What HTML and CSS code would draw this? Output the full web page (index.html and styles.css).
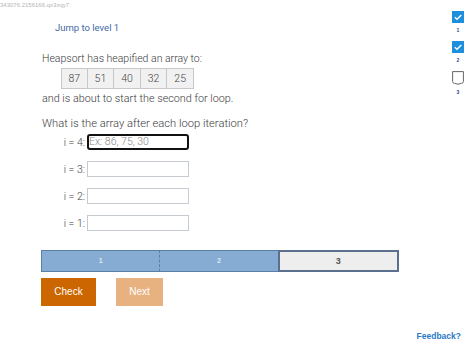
FILE: index.html
```html
<!DOCTYPE html>
<html>
<head>
<meta charset="utf-8">
<link rel="stylesheet" href="styles.css">
</head>
<body>
<div class="page">
  <div class="top">
    <div class="main">
      <div class="uid">343076.2156166.qx3zqy7</div>
      <div class="jump">Jump to level 1</div>
      <p class="line first">Heapsort has heapified an array to:</p>
      <div class="array">
        <span class="cell">87</span><span class="cell">51</span><span class="cell">40</span><span class="cell">32</span><span class="cell">25</span>
      </div>
      <p class="line second-line">and is about to start the second for loop.</p>
      <p class="line q">What is the array after each loop iteration?</p>
      <div class="rows">
        <div class="row"><span class="lbl">i = 4:</span><span class="input focus"><span class="ph">Ex: 86, 75, 30</span></span></div>
        <div class="row"><span class="lbl">i = 3:</span><span class="input"></span></div>
        <div class="row"><span class="lbl">i = 2:</span><span class="input"></span></div>
        <div class="row"><span class="lbl">i = 1:</span><span class="input"></span></div>
      </div>
      <div class="progress">
        <div class="seg done">1</div>
        <div class="seg done second">2</div>
        <div class="seg current">3</div>
      </div>
      <div class="buttons">
        <span class="btn check">Check</span>
        <span class="btn next">Next</span>
      </div>
    </div>
    <div class="side">
      <div class="lvl">
        <svg class="box" width="12" height="12" viewBox="0 0 12 12"><rect width="12" height="12" fill="#1e8fdc"/><path d="M2.8 6.2 L5 8.2 L9.3 3.9" stroke="#fff" stroke-width="1.4" fill="none"/></svg>
        <span class="num">1</span>
      </div>
      <div class="lvl">
        <svg class="box" width="12" height="12" viewBox="0 0 12 12"><rect width="12" height="12" fill="#1e8fdc"/><path d="M2.8 6.2 L5 8.2 L9.3 3.9" stroke="#fff" stroke-width="1.4" fill="none"/></svg>
        <span class="num">2</span>
      </div>
      <div class="lvl">
        <svg class="box" width="12" height="14" viewBox="0 0 12 14"><path d="M0.6 0.6 H11.4 V10.6 Q11.4 12 9.5 12.4 L6 13.2 L2.5 12.4 Q0.6 12 0.6 10.6 Z" fill="#fff" stroke="#666" stroke-width="1"/></svg>
        <span class="num">3</span>
      </div>
    </div>
  </div>
  <div class="foot"><span class="feedback">Feedback?</span></div>
</div>
</body>
</html>
```

FILE: styles.css
```css
* { box-sizing: border-box; }
html, body { margin: 0; padding: 0; background: #fff; }
body { font-family: Roboto, "Noto Sans", sans-serif; color: #3a3a3a; font-weight: 300; }
.page { width: 472px; height: 343px; display: flex; flex-direction: column; }
.top { display: flex; flex: 1; }
.main { flex: 1; }
.uid { font-family: "Liberation Sans", sans-serif; font-size: 6px; color: #b5b5b5; padding-top: 2px; height: 9px; line-height: 7px; }
.jump { font-size: 9.5px; color: #3f6aa3; margin: 13px 0 0 55px; line-height: 11px; font-weight: 400; }
.line { margin: 0 0 0 42px; font-size: 10.5px; line-height: 12px; }
.line.first { margin-top: 20px; }
.line.second-line { font-size: 10.8px; }
.array { display: flex; margin: 3px 0 4px 61px; }
.cell { width: 26.6px; height: 21px; border: 1px solid #c8c8c8; border-left: none; background: #f1f1f1; font-size: 10.5px; line-height: 19px; text-align: center; color: #444; }
.cell:first-child { border-left: 1px solid #c8c8c8; }
.line.q { margin-top: 13px; font-size: 11.2px; }
.rows { display: flex; flex-direction: column; gap: 11px; margin-top: 4px; }
.row { display: flex; align-items: center; }
.lbl { width: 87px; text-align: right; font-size: 10.5px; padding-right: 2px; color: #444; }
.input { width: 102px; height: 16px; border: 1px solid #c5cbd0; background: #fff; display: block; }
.input.focus { border: 2px solid #111; border-radius: 3px; width: 102px; }
.ph { font-size: 10.5px; color: #888; line-height: 12px; padding-left: 0px; display: block; }
.progress { display: flex; margin: 19px 0 0 41px; width: 358px; height: 22px; }
.seg { flex: 1; font-family: "Liberation Sans", sans-serif; font-size: 7px; text-align: center; line-height: 20px; }
.seg.done { background: #87acd3; color: #dce8f4; border: 1px solid #5b7ea6; font-weight: bold; }
.seg.done:first-child { border-right: none; }
.seg.second { border-left: 1px dashed #5b7ea6; border-right: none; }
.seg.current { background: #eeeeee; border: 2px solid #5b6f8e; color: #555; font-size: 9px; font-weight: bold; line-height: 18px; }
.buttons { display: flex; gap: 20px; margin: 6px 0 0 41px; }
.btn { display: block; height: 28px; line-height: 28px; font-family: "Liberation Sans", sans-serif; font-size: 10px; color: #fff; text-align: center; font-weight: 400; }
.check { width: 55px; background: #cc6600; }
.next { width: 47px; background: #e8b280; }
.side { width: 28px; display: flex; flex-direction: column; align-items: center; padding-top: 11px; padding-right: 0; }
.lvl { display: flex; flex-direction: column; align-items: center; height: 30px; }
.box { display: block; }
.num { font-family: "Liberation Sans", sans-serif; font-size: 5px; color: #2a4a8a; line-height: 8px; margin-top: 3px; font-weight: bold; }
.foot { display: flex; justify-content: flex-end; padding: 0 11px 2px 0; }
.feedback { font-family: "Liberation Sans", sans-serif; font-size: 8.5px; font-weight: bold; color: #2a7bc7; }
```
